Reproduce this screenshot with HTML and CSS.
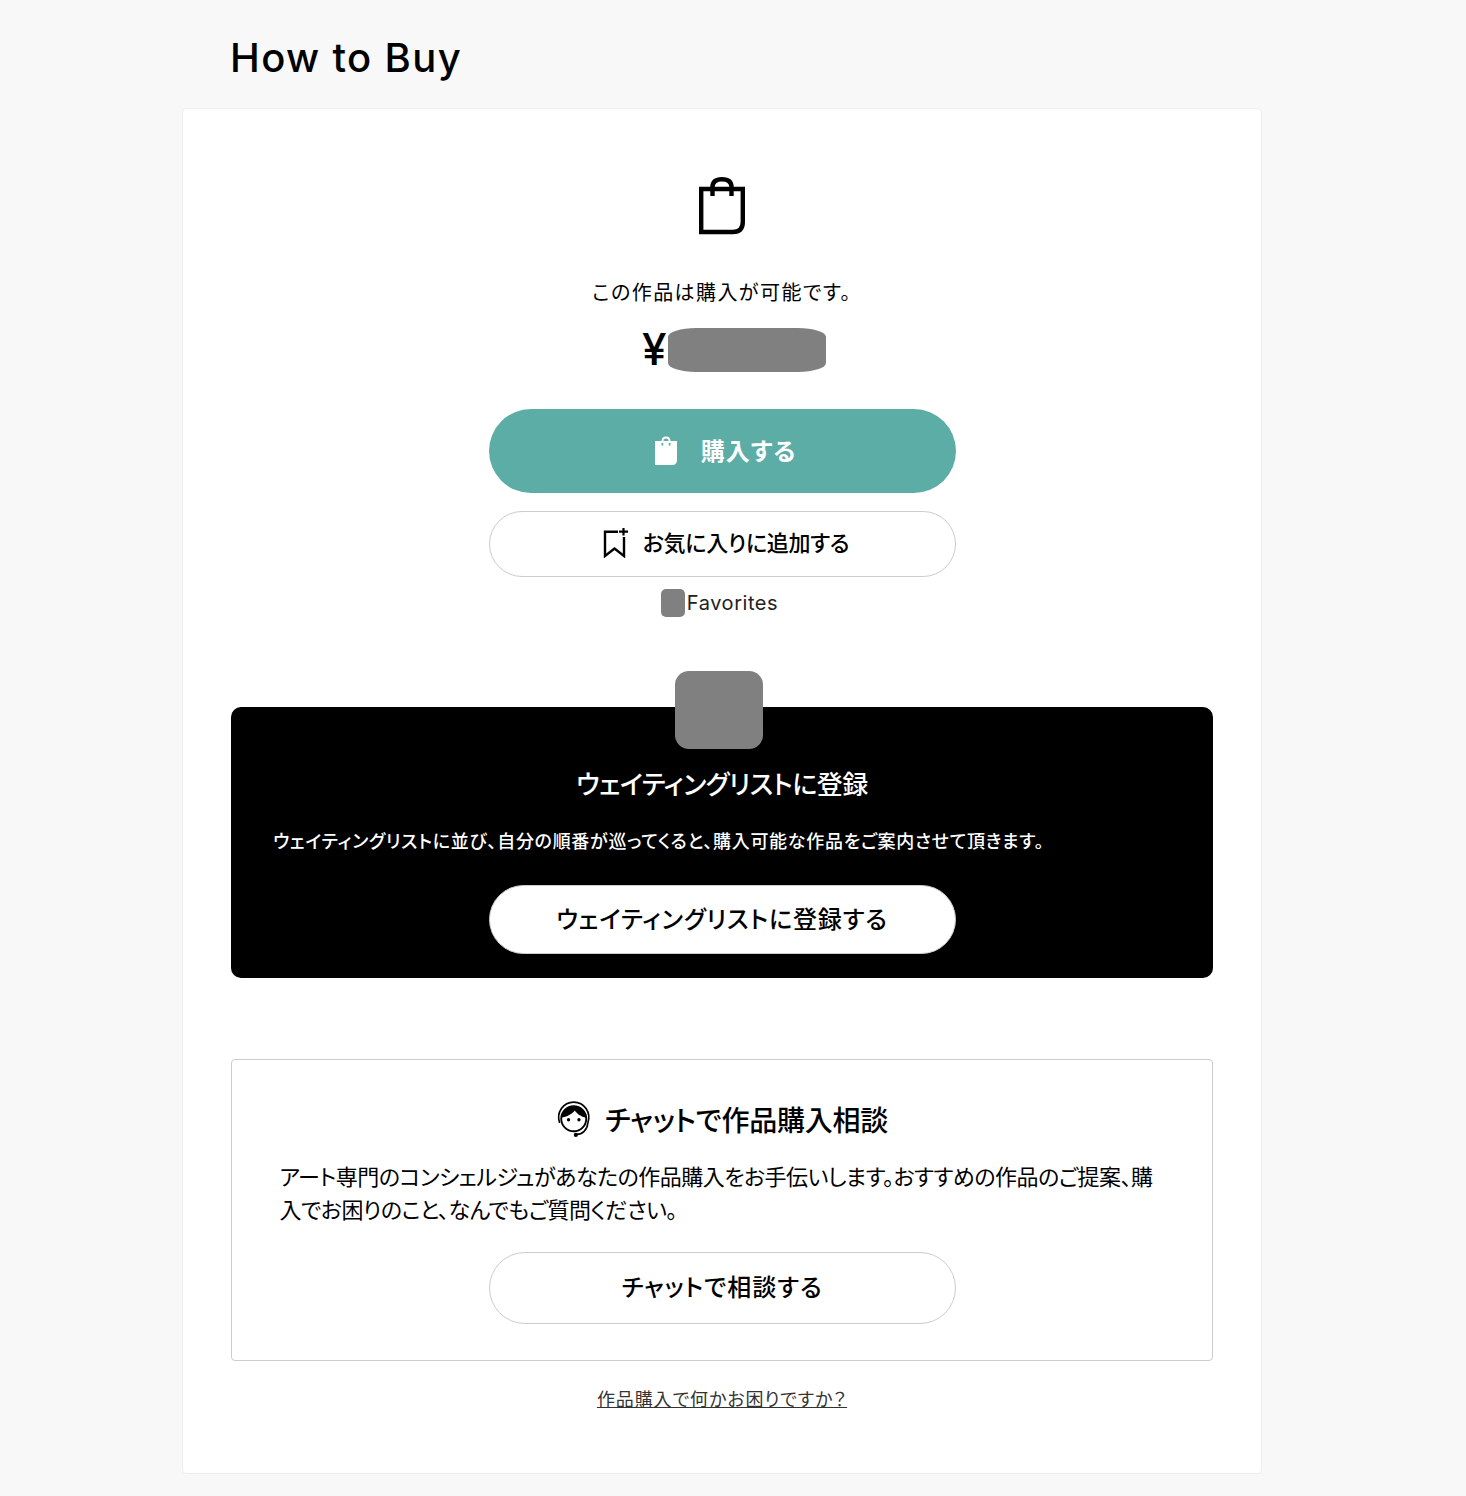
FILE: index.html
```html
<!DOCTYPE html>
<html lang="ja">
<head>
<meta charset="utf-8">
<title>How to Buy</title>
<link rel="stylesheet" href="styles.css">
</head>
<body>
<main class="page">
  <h1 class="title">How to Buy</h1>
  <section class="card">
    <svg class="bag" viewBox="0 0 46 58" aria-hidden="true">
      <path d="M2.200 12H43.800V45Q43.800 55 33.800 55H2.200Z" fill="none" stroke="#000" stroke-width="4.400"/>
      <path d="M13.500 19V10Q13.500 2.200 23 2.200Q32.500 2.200 32.500 10V19" fill="none" stroke="#000" stroke-width="4.400"/>
    </svg>
    <p class="lead">この作品は購入が可能です。</p>
    <div class="price"><span class="yen">¥</span><span class="mask-price"></span></div>
    <a class="btn btn-buy">
      <svg class="buy-icon" viewBox="0 0 24 30" aria-hidden="true">
        <path d="M1 5H7.500Q7.500 0.500 12 0.500Q16.500 0.500 16.500 5H23V24Q23 29 18 29H1ZM9.500 5H14.500Q14.500 2.500 12 2.500Q9.500 2.500 9.500 5Z" fill="#fff" fill-rule="evenodd"/>
        <rect x="7.500" y="7" width="1.800" height="2.500" fill="#5dada7"/><rect x="14.700" y="7" width="1.800" height="2.500" fill="#5dada7"/>
      </svg>
      <span class="btn-label">購入する</span>
    </a>
    <a class="btn btn-fav">
      <svg class="fav-icon" viewBox="0 0 26 30" aria-hidden="true">
        <path d="M15 3.700H2V28L11.500 20.500L21 28V9" fill="none" stroke="#000" stroke-width="2.400"/>
        <path d="M20.500 0V7.500M16 3.700H25" fill="none" stroke="#000" stroke-width="2.200"/>
      </svg>
      <span>お気に入りに追加する</span>
    </a>
    <div class="fav-count"><span class="mask-count"></span><span>Favorites</span></div>
    <div class="waitlist">
      <span class="mask-badge"></span>
      <h2 class="wait-title">ウェイティングリストに登録</h2>
      <p class="wait-text">ウェイティングリストに並び、自分の順番が巡ってくると、購入可能な作品をご案内させて頂きます。</p>
      <a class="btn btn-wait">ウェイティングリストに登録する</a>
    </div>
    <div class="chat">
      <h2 class="chat-title">
        <svg class="agent" viewBox="1.500 1 33.500 34.500" aria-hidden="true">
          <path d="M4.500 22C1 12 8 2 18 2C28 2 35 12 31.500 22" fill="none" stroke="#000" stroke-width="1.600"/>
          <circle cx="18" cy="18" r="12" fill="#fff" stroke="#000" stroke-width="1.800"/>
          <path d="M6 17C7 9 12 6 18 6C24 6 29 9 30 17C25 16 21 13 19 10C16 14 11 16 6 17Z" fill="#000"/>
          <circle cx="13" cy="19" r="1.600" fill="#000"/><circle cx="23" cy="19" r="1.600" fill="#000"/>
          <path d="M31.500 22C31 29 26 33 21 33" fill="none" stroke="#000" stroke-width="1.500"/>
          <circle cx="20" cy="33.500" r="2" fill="#000"/>
        </svg>
        <span>チャットで作品購入相談</span>
      </h2>
      <p class="chat-text">アート専門のコンシェルジュがあなたの作品購入をお手伝いします。おすすめの作品のご提案、購入でお困りのこと、なんでもご質問ください。</p>
      <a class="btn btn-chat">チャットで相談する</a>
    </div>
    <a class="help">作品購入で何かお困りですか？</a>
  </section>
</main>
</body>
</html>
```
FILE: styles.css
```css
* { box-sizing: border-box; }
html, body { margin: 0; padding: 0; }
body {
  background: #f8f8f8;
  color: #000;
  font-family: "Noto Sans CJK JP", sans-serif;
  font-feature-settings: "palt";
  height: 1496px;
  overflow: hidden;
}
.page { width: 1080px; margin-left: 182px; }
.title {
  margin: 0;
  height: 108px;
  padding: 30px 0 0 48px;
  font-family: "Inter", sans-serif;
  font-size: 40px;
  line-height: 56px;
  font-weight: 500;
  letter-spacing: 1.35px;
}
.card {
  display: flex;
  flex-direction: column;
  align-items: center;
  height: 1366px;
  padding: 68px 48px 0;
  background: #fff;
  border: 1px solid #eee;
  border-radius: 4px;
}
.bag { width: 46px; height: 58px; display: block; }
.lead { margin: 41px 0 0; font-size: 20px; line-height: 32px; height: 32px; letter-spacing: 1.45px; }
.price { display: flex; align-items: center; height: 44px; margin: 20px 0 0 24px; }
.yen { font-family: "Inter", sans-serif; font-size: 44px; font-weight: 500; line-height: 44px; width: 26px; margin-top: -3px; }
.mask-price { width: 158px; height: 44px; background: #808080; border-radius: 28px / 9px; }
.btn {
  display: flex;
  align-items: center;
  justify-content: center;
  width: 467px;
  border-radius: 999px;
  background: #fff;
  color: #000;
  border: 1px solid #ccc;
  font-weight: 500;
}
.btn-buy {
  height: 84px;
  margin-top: 37px;
  gap: 23px;
  background: #5dada7;
  border: none;
  color: #fff;
  font-size: 24px;
  font-weight: 700;
  letter-spacing: 1px;
}
.btn-label { margin-bottom: 4px; }
.buy-icon { width: 24px; height: 30px; margin-left: 6px; }
.btn-fav { height: 66px; margin-top: 18px; padding-bottom: 6px; gap: 14px; font-size: 22px; letter-spacing: -0.3px; }
.fav-icon { width: 26px; height: 30px; margin-left: 8px; margin-top: 4px; }
.fav-count {
  display: flex;
  align-items: center;
  gap: 2px;
  height: 28px;
  margin-top: 12px;
  margin-left: -5px;
  font-family: "Inter", sans-serif;
  font-size: 20px;
  letter-spacing: 0.55px;
  color: #222;
}
.mask-count { width: 24px; height: 28px; background: #808080; border-radius: 5px; }
.waitlist {
  position: relative;
  width: 982px;
  height: 271px;
  margin-top: 90px;
  padding: 58px 42px 0;
  display: flex;
  flex-direction: column;
  align-items: center;
  background: #000;
  color: #fff;
  border-radius: 10px;
}
.mask-badge {
  position: absolute;
  top: -36px;
  left: 444px;
  width: 88px;
  height: 78px;
  background: #808080;
  border-radius: 14px;
}
.wait-title { margin: 0; font-size: 26px; line-height: 36px; font-weight: 500; letter-spacing: -0.45px; }
.wait-text { align-self: flex-start; margin: 23px 0 0; font-size: 18px; line-height: 32px; white-space: nowrap; font-weight: 500; letter-spacing: 0.7px; }
.btn-wait { height: 69px; margin-top: 29px; padding-bottom: 5px; flex: none; font-size: 24px; letter-spacing: 0.9px; }
.chat {
  width: 982px;
  height: 302px;
  margin-top: 81px;
  padding: 39px 48px 0;
  display: flex;
  flex-direction: column;
  align-items: center;
  border: 1px solid #ccc;
  border-radius: 4px;
}
.chat-title {
  display: flex;
  align-items: center;
  gap: 13px;
  height: 40px;
  margin: 0;
  font-size: 28px;
  font-weight: 500;
  letter-spacing: -0.25px;
}
.agent { width: 36px; height: 36px; }
.chat-text { margin: 20px 0 0 -1px; width: 100%; font-size: 22px; line-height: 33px; height: 66px; letter-spacing: -0.5px; }
.btn-chat { height: 72px; margin-top: 27px; padding-bottom: 6px; flex: none; font-size: 24px; letter-spacing: 1px; }
.help {
  margin-top: 25px;
  font-size: 18px;
  line-height: 24px;
  letter-spacing: 0.9px;
  color: #333;
  text-decoration: underline;
}
```
